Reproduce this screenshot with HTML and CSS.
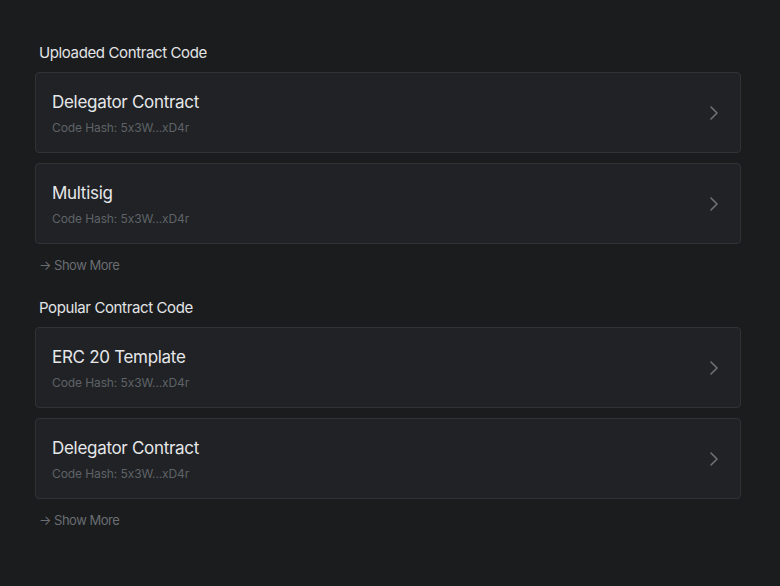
FILE: index.html
```html
<!DOCTYPE html>
<html>
<head>
<meta charset="utf-8">
<link rel="stylesheet" href="styles.css">
</head>
<body>
<main class="page">
  <section class="section">
    <h2 class="section-title">Uploaded Contract Code</h2>
    <div class="card-list">
      <div class="card">
        <div class="card-text">
          <div class="card-title">Delegator Contract</div>
          <div class="card-sub">Code Hash: 5x3W...xD4r</div>
        </div>
        <svg class="chev" width="10" height="16" viewBox="0 0 10 16"><path d="M2 2l6 6-6 6" fill="none" stroke="currentColor" stroke-width="1.6" stroke-linecap="round" stroke-linejoin="round"/></svg>
      </div>
      <div class="card">
        <div class="card-text">
          <div class="card-title">Multisig</div>
          <div class="card-sub">Code Hash: 5x3W...xD4r</div>
        </div>
        <svg class="chev" width="10" height="16" viewBox="0 0 10 16"><path d="M2 2l6 6-6 6" fill="none" stroke="currentColor" stroke-width="1.6" stroke-linecap="round" stroke-linejoin="round"/></svg>
      </div>
    </div>
    <div class="show-more">→ Show More</div>
  </section>
  <section class="section second">
    <h2 class="section-title">Popular Contract Code</h2>
    <div class="card-list">
      <div class="card">
        <div class="card-text">
          <div class="card-title">ERC 20 Template</div>
          <div class="card-sub">Code Hash: 5x3W...xD4r</div>
        </div>
        <svg class="chev" width="10" height="16" viewBox="0 0 10 16"><path d="M2 2l6 6-6 6" fill="none" stroke="currentColor" stroke-width="1.6" stroke-linecap="round" stroke-linejoin="round"/></svg>
      </div>
      <div class="card">
        <div class="card-text">
          <div class="card-title">Delegator Contract</div>
          <div class="card-sub">Code Hash: 5x3W...xD4r</div>
        </div>
        <svg class="chev" width="10" height="16" viewBox="0 0 10 16"><path d="M2 2l6 6-6 6" fill="none" stroke="currentColor" stroke-width="1.6" stroke-linecap="round" stroke-linejoin="round"/></svg>
      </div>
    </div>
    <div class="show-more">→ Show More</div>
  </section>
</main>
</body>
</html>
```
FILE: styles.css
```css
html, body {
  margin: 0;
  padding: 0;
  background: #1a1c1e;
  font-family: Inter, "Noto Sans", sans-serif;
  font-feature-settings: "calt" 0;
  height: 100%;
}
.page {
  padding: 41px 39px 0 35px;
}
.section-title {
  margin: 0 0 7px 4px;
  font-size: 15px;
  font-weight: 400;
  line-height: 24px;
  color: #e3e4e6;
  letter-spacing: -0.38px;
}
.second {
  margin-top: 21px;
}
.card-list {
  display: flex;
  flex-direction: column;
  gap: 10px;
}
.card {
  display: flex;
  align-items: center;
  justify-content: space-between;
  background: #202225;
  border: 1px solid #2f3236;
  border-radius: 4px;
  padding: 17px 21px 15px 16px;
}
.card-title {
  font-size: 17px;
  line-height: 24px;
  color: #e6e7e9;
  letter-spacing: -0.3px;
}
.card-sub {
  margin-top: 5px;
  font-size: 12px;
  line-height: 18px;
  color: #5f6267;
  letter-spacing: -0.1px;
}
.chev {
  color: #6e7176;
  display: block;
  margin-top: -2px;
}
.show-more {
  margin: 11px 0 0 4px;
  font-size: 13px;
  line-height: 20px;
  color: #6a6d72;
  letter-spacing: -0.5px;
}
```
